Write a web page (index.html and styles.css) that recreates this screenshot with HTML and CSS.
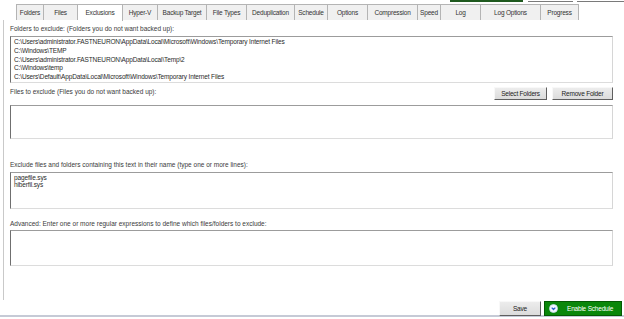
FILE: index.html
```html
<html>
    <head>
        <title>Exclusions</title>
        <link rel="stylesheet" href="styles.css">
    </head>
    <body>
        <div class="window">
            <div class="topbar">
                <div class="stub green"></div>
                <div class="stub grey1"></div>
                <div class="stub grey2"></div>
            </div>
            <div class="tabs">
                <div class="tab w27">Folders</div>
                <div class="tab w34">Files</div>
                <div class="tab w45 active">Exclusions</div>
                <div class="tab w35">Hyper-V</div>
                <div class="tab w49">Backup Target</div>
                <div class="tab w40">File Types</div>
                <div class="tab w48">Deduplication</div>
                <div class="tab w33">Schedule</div>
                <div class="tab w40">Options</div>
                <div class="tab w50">Compression</div>
                <div class="tab w23">Speed</div>
                <div class="tab w40">Log</div>
                <div class="tab w60">Log Options</div>
                <div class="tab w38">Progress</div>
            </div>
            <div class="panel">
                <div class="label first">Folders to exclude: (Folders you do not want backed up):</div>
                <div class="box list">
                    <div>C:\Users\administrator.FASTNEURON\AppData\Local\Microsoft\Windows\Temporary Internet Files</div>
                    <div>C:\Windows\TEMP</div>
                    <div>C:\Users\administrator.FASTNEURON\AppData\Local\Temp\2</div>
                    <div>C:\Windows\temp</div>
                    <div>C:\Users\Default\AppData\Local\Microsoft\Windows\Temporary Internet Files</div>
                </div>
                <div class="row">
                    <div class="label">Files to exclude (Files you do not want backed up):</div>
                    <div class="buttons">
                        <button class="btn sel">Select Folders</button>
                        <button class="btn rem">Remove Folder</button>
                    </div>
                </div>
                <div class="box files"></div>
                <div class="label third">Exclude files and folders containing this text in their name (type one or more lines):</div>
                <div class="box names">
                    <div>pagefile.sys</div>
                    <div>hiberfil.sys</div>
                </div>
                <div class="label fourth">Advanced: Enter one or more regular expressions to define which files/folders to exclude:</div>
                <div class="box advanced"></div>
            </div>
            <div class="footer">
                <button class="btn save">Save</button>
                <button class="enable">
                    <svg width="9" height="9" viewBox="0 0 9 9">
                        <circle cx="4.5" cy="4.5" r="4" fill="#f4f8ff" stroke="#c8d8ee" stroke-width="0.8"/>
                        <path d="M2.7 3.6 L4.5 5.5 L6.3 3.6" fill="none" stroke="#2a62c8" stroke-width="1.3"/>
                    </svg>
                    <span>Enable Schedule</span>
                </button>
            </div>
        </div>
    </body>
</html>
```

FILE: styles.css
```css
body{
    margin: 0;
    background: #ffffff;
    font-family: "Liberation Sans", Arial, sans-serif;
    font-size: 6.5px;
    color: #333;
}
.window{
    width: 624px;
    height: 319px;
    display: flex;
    flex-direction: column;
    overflow: hidden;
}
.topbar{
    height: 4px;
    display: flex;
    justify-content: flex-end;
}
.stub{
    height: 2px;
}
.green{
    width: 73px;
    background: #1f5a1f;
    margin-right: 5px;
}
.grey1{
    width: 45px;
    border-bottom: 1px solid #7a7a7a;
    height: 1px;
    margin-right: 4px;
}
.grey2{
    width: 47px;
    border-bottom: 1px solid #7a7a7a;
    height: 1px;
}
.tabs{
    height: 16px;
    display: flex;
    padding-left: 16px;
}
.tab{
    height: 15px;
    line-height: 15px;
    text-align: center;
    background: #f0f0f0;
    border: 1px solid #b4b4b4;
    border-bottom: none;
    border-left: none;
    color: #333;
    white-space: nowrap;
    letter-spacing: -0.2px;
}
.tab:first-child{
    border-left: 1px solid #b4b4b4;
}
.tab.active{
    background: #ffffff;
    height: 16px;
}
.w23{ width: 22px; }
.w27{ width: 26px; }
.w33{ width: 32px; }
.w34{ width: 33px; }
.w35{ width: 34px; }
.w38{ width: 37px; }
.w40{ width: 39px; }
.w45{ width: 44px; }
.w48{ width: 47px; }
.w49{ width: 48px; }
.w50{ width: 49px; }
.w60{ width: 59px; }
.panel{
    height: 280px;
    margin-left: 3px;
    border-left: 1px solid #c9c9c9;
    padding-left: 6px;
    padding-right: 11px;
    display: flex;
    flex-direction: column;
}
.label{
    line-height: 9px;
    height: 9px;
    color: #3a3a3a;
    white-space: nowrap;
}
.label.first{
    margin-top: 4px;
}
.box{
    border-top: 1px solid #9c9c9c;
    border-left: 1px solid #6f6f6f;
    border-right: 1px solid #d6d6d6;
    border-bottom: 1px solid #dcdcdc;
    background: #fff;
    padding: 1px 3px;
    line-height: 8.8px;
    letter-spacing: -0.14px;
    color: #2a2a2a;
    box-sizing: border-box;
}
.list{
    margin-top: 3px;
    height: 47px;
    padding-top: 1px;
}
.row{
    margin-top: 4px;
    height: 13px;
    display: flex;
    justify-content: space-between;
    align-items: flex-start;
}
.buttons{
    display: flex;
    gap: 5px;
}
.btn{
    font-family: "Liberation Sans", Arial, sans-serif;
    font-size: 6.5px;
    letter-spacing: -0.2px;
    color: #222;
    background: linear-gradient(#ececec, #dcdcdc);
    border: 1px solid #f8f8f8;
    border-right-color: #5f5f5f;
    border-bottom-color: #5f5f5f;
    padding: 0;
    margin: 0;
    height: 13px;
}
.sel{
    width: 53px;
}
.rem{
    width: 61px;
}
.files{
    margin-top: 5px;
    height: 34px;
}
.label.third{
    margin-top: 21px;
}
.names{
    margin-top: 3px;
    height: 37px;
    line-height: 7px;
}
.label.fourth{
    margin-top: 10px;
}
.advanced{
    margin-top: 2px;
    height: 36px;
}
.footer{
    height: 17px;
    border-bottom: 2px solid #c6cad6;
    display: flex;
    justify-content: flex-end;
    align-items: flex-start;
    padding-top: 1px;
    padding-right: 2px;
    gap: 3px;
    box-sizing: border-box;
}
.save{
    width: 42px;
    height: 15px;
}
.enable{
    width: 78px;
    height: 15px;
    background: #0a870a;
    border: 1px solid #045a04;
    color: #fff;
    font-family: "Liberation Sans", Arial, sans-serif;
    font-size: 6.5px;
    letter-spacing: -0.2px;
    display: flex;
    align-items: center;
    padding: 0 0 0 4px;
    gap: 9px;
    margin: 0;
}
```
